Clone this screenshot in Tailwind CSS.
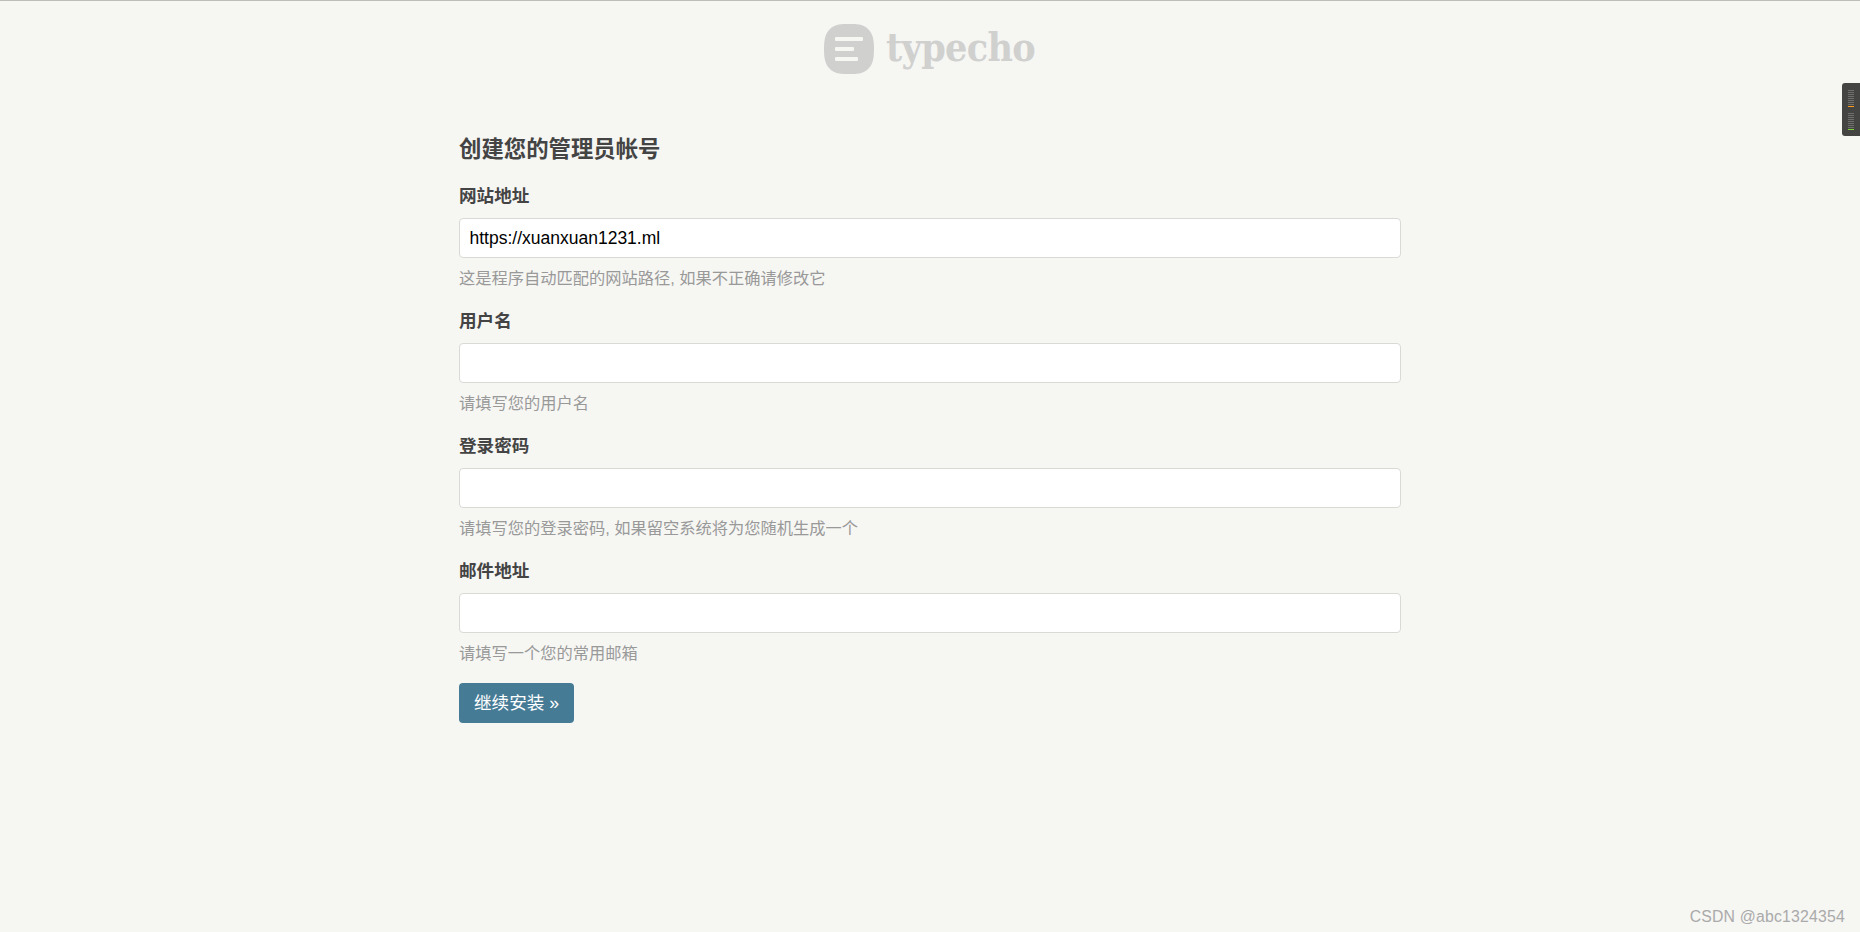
<!DOCTYPE html>
<html lang="zh-CN">
<head>
<meta charset="utf-8">
<title>Typecho</title>
<script src="https://cdn.jsdelivr.net/npm/@tailwindcss/browser@4"></script>
</head>
<body class="relative h-[932px] overflow-hidden bg-[#f6f6f3] text-[#444] font-['Liberation_Sans','Noto_Sans_CJK_SC',sans-serif]">
<div class="h-px bg-[#bdbdbb]"></div>
<header class="flex h-[98px] items-start justify-center pt-[23px] pr-[1px]">
  <div class="flex items-center gap-3">
    <svg width="50" height="50" viewBox="0 0 50 50" aria-hidden="true">
      <path d="M25 0C33 0 38 0 43 4 49 9 50 16 50 25S49 41 43 46C38 50 33 50 25 50S12 50 7 46C1 41 0 34 0 25S1 9 7 4C12 0 17 0 25 0Z" fill="#d0d0cf"/>
      <rect x="11" y="13" width="28" height="4" rx="1" fill="#f6f6f3"/>
      <rect x="11" y="23" width="19" height="4" rx="1" fill="#f6f6f3"/>
      <rect x="11" y="33" width="23" height="4" rx="1" fill="#f6f6f3"/>
    </svg>
    <span class="font-['DejaVu_Serif_Condensed','DejaVu_Serif',serif] text-[39px] leading-[50px] font-bold tracking-[-0.7px] text-[#d0d0cf] -translate-y-[2px]">typecho</span>
  </div>
</header>
<main class="mx-auto w-[942px] pt-[32px]">
  <h2 class="text-[22.4px] leading-[30px] font-bold mt-[4px] mb-[19px]">创建您的管理员帐号</h2>
  <form class="flex flex-col">
    <div class="h-[125px]">
      <label class="block text-[17.6px] leading-[24px] font-bold mb-[10px]">网站地址</label>
      <input type="text" value="https://xuanxuan1231.ml" class="block h-10 w-full rounded-sm border border-[#d9d9d6] bg-white px-[9.5px] text-[17.5px] text-black outline-none">
      <p class="mt-[10px] text-[16.25px] leading-[20px] text-[#999]">这是程序自动匹配的网站路径, 如果不正确请修改它</p>
    </div>
    <div class="h-[125px]">
      <label class="block text-[17.6px] leading-[24px] font-bold mb-[10px]">用户名</label>
      <input type="text" class="block h-10 w-full rounded-sm border border-[#d9d9d6] bg-white px-[9.5px] text-[17.5px] text-black outline-none">
      <p class="mt-[10px] text-[16.25px] leading-[20px] text-[#999]">请填写您的用户名</p>
    </div>
    <div class="h-[125px]">
      <label class="block text-[17.6px] leading-[24px] font-bold mb-[10px]">登录密码</label>
      <input type="text" class="block h-10 w-full rounded-sm border border-[#d9d9d6] bg-white px-[9.5px] text-[17.5px] text-black outline-none">
      <p class="mt-[10px] text-[16.25px] leading-[20px] text-[#999]">请填写您的登录密码, 如果留空系统将为您随机生成一个</p>
    </div>
    <div class="h-[124px]">
      <label class="block text-[17.6px] leading-[24px] font-bold mb-[10px]">邮件地址</label>
      <input type="text" class="block h-10 w-full rounded-sm border border-[#d9d9d6] bg-white px-[9.5px] text-[17.5px] text-black outline-none">
      <p class="mt-[10px] text-[16.25px] leading-[20px] text-[#999]">请填写一个您的常用邮箱</p>
    </div>
    <div>
      <button type="button" class="h-10 w-[115px] rounded-sm bg-[#467b96] text-[17.6px] text-white">继续安装 »</button>
    </div>
  </form>
</main>
<aside class="absolute right-0 top-[83px] flex h-[53px] w-[18px] flex-col gap-[6px] rounded-l-[3px] bg-[#444442] pt-[7px] pl-[6px]">
  <div class="flex flex-col gap-px">
    <div class="h-px w-[6px] bg-[#6f6f6d]"></div><div class="h-px w-[6px] bg-[#6f6f6d]"></div><div class="h-px w-[6px] bg-[#6f6f6d]"></div><div class="h-px w-[6px] bg-[#6f6f6d]"></div><div class="h-px w-[6px] bg-[#6f6f6d]"></div><div class="h-px w-[6px] bg-[#6f6f6d]"></div><div class="h-px w-[6px] bg-[#6f6f6d]"></div><div class="h-px w-[6px] bg-[#6f6f6d]"></div><div class="h-px w-[6px] bg-[#ff9a1a]"></div>
  </div>
  <div class="flex flex-col gap-px">
    <div class="h-px w-[6px] bg-[#6f6f6d]"></div><div class="h-px w-[6px] bg-[#6f6f6d]"></div><div class="h-px w-[6px] bg-[#6f6f6d]"></div><div class="h-px w-[6px] bg-[#6f6f6d]"></div><div class="h-px w-[6px] bg-[#6f6f6d]"></div><div class="h-px w-[6px] bg-[#6f6f6d]"></div><div class="h-px w-[6px] bg-[#6f6f6d]"></div><div class="h-px w-[6px] bg-[#6f6f6d]"></div><div class="h-px w-[6px] bg-[#7fd13b]"></div>
  </div>
</aside>
<div class="absolute right-[15px] bottom-[5px] text-[15.8px] leading-5 tracking-[0.2px] text-[#aaa]">CSDN @abc1324354</div>
</body>
</html>
